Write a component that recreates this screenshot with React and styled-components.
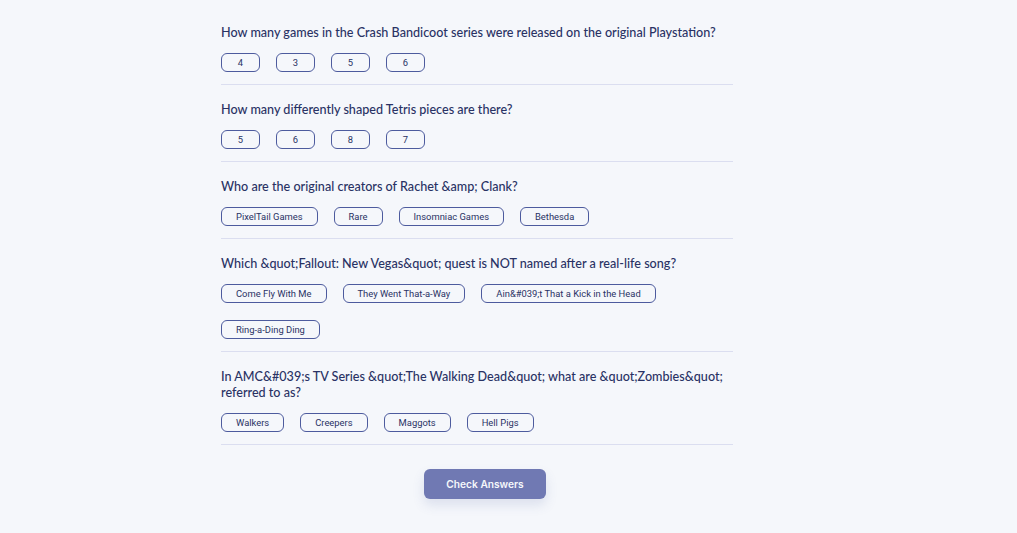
import React from 'react'
import styled, { createGlobalStyle } from 'styled-components'

const questions = [
  {
    q: 'How many games in the Crash Bandicoot series were released on the original Playstation?',
    answers: ['4', '3', '5', '6'],
  },
  {
    q: 'How many differently shaped Tetris pieces are there?',
    answers: ['5', '6', '8', '7'],
  },
  {
    q: 'Who are the original creators of Rachet &amp; Clank?',
    answers: ['PixelTail Games', 'Rare', 'Insomniac Games', 'Bethesda'],
  },
  {
    q: 'Which &quot;Fallout: New Vegas&quot; quest is NOT named after a real-life song?',
    answers: ['Come Fly With Me', 'They Went That-a-Way', 'Ain&#039;t That a Kick in the Head', 'Ring-a-Ding Ding'],
  },
  {
    q: 'In AMC&#039;s TV Series &quot;The Walking Dead&quot; what are &quot;Zombies&quot; referred to as?',
    answers: ['Walkers', 'Creepers', 'Maggots', 'Hell Pigs'],
  },
]

const GlobalStyle = createGlobalStyle`
  html, body {
    margin: 0;
    padding: 0;
    background: #f5f7fb;
  }
  * { box-sizing: border-box; }
`

const App = () => (
  <>
    <GlobalStyle />
    <Page>
      <Quiz>
        {questions.map(item => (
          <Question key={item.q}>
            <QuestionTitle>{item.q}</QuestionTitle>
            <Answers>
              {item.answers.map(a => (
                <Answer key={a}>{a}</Answer>
              ))}
            </Answers>
          </Question>
        ))}
        <Footer>
          <CheckButton>Check Answers</CheckButton>
        </Footer>
      </Quiz>
    </Page>
  </>
)

export default App

const Page = styled.main`
  min-height: 533px;
  background: #f5f7fb;
  padding-top: 25px;
`
const Quiz = styled.div`
  width: 512px;
  margin-left: 221px;
`
const Question = styled.section`
  padding-bottom: 12px;
  margin-bottom: 17px;
  border-bottom: 1px solid #dbdef0;
`
const QuestionTitle = styled.h2`
  margin: 0 0 12px;
  font-family: Lato, sans-serif;
  font-weight: 500;
  font-size: 12.6px;
  line-height: 16px;
  color: #293264;
`
const Answers = styled.div`
  display: flex;
  flex-wrap: wrap;
  column-gap: 16px;
  row-gap: 17px;
`
const Answer = styled.button`
  min-width: 39px;
  height: 19px;
  padding: 0 14px;
  border: 0.8px solid #4d5b9e;
  border-radius: 6px;
  background: transparent;
  font-family: Roboto, sans-serif;
  font-size: 9.4px;
  color: #293264;
  cursor: pointer;
`
const Footer = styled.div`
  display: flex;
  justify-content: center;
  padding-top: 7px;
  padding-left: 16px;
`
const CheckButton = styled.button`
  width: 122px;
  height: 30px;
  border: none;
  border-radius: 6px;
  background: #7079b3;
  color: #f5f7fb;
  font-family: Inter, sans-serif;
  font-weight: 600;
  font-size: 10.2px;
  box-shadow: 0 6px 12px rgba(77, 91, 158, 0.15);
  cursor: pointer;
`
